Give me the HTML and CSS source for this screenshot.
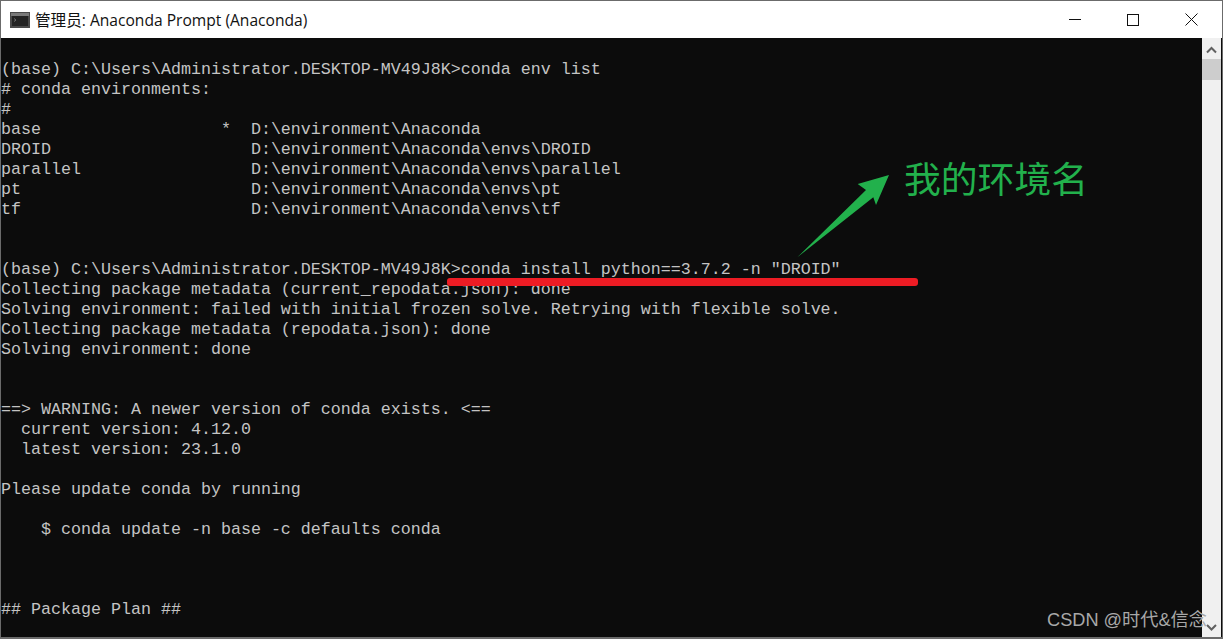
FILE: index.html
```html
<!DOCTYPE html>
<html lang="zh-CN">
<head>
<meta charset="utf-8">
<title>管理员: Anaconda Prompt (Anaconda)</title>
<link rel="stylesheet" href="styles.css">
</head>
<body>
<div class="window">
  <header class="titlebar">
    <svg class="app-icon" width="20" height="16" viewBox="0 0 20 16">
      <rect x="0" y="0" width="20" height="16" fill="#4a4a4a"/>
      <rect x="1" y="1" width="18" height="3" fill="#7a7a7a"/>
      <rect x="2" y="4" width="16" height="10" fill="#242424"/>
      <path d="M4 6.5l2 1.5-2 1.5" fill="none" stroke="#6f6f6f" stroke-width="1"/>
    </svg>
    <span class="title">管理员: Anaconda Prompt (Anaconda)</span>
    <div class="controls">
      <span class="control"><svg width="12" height="12" viewBox="0 0 12 12"><rect x="0" y="5" width="12" height="1" fill="#111"/></svg></span>
      <span class="control"><svg width="12" height="12" viewBox="0 0 12 12"><rect x="0.5" y="0.5" width="11" height="11" fill="none" stroke="#111"/></svg></span>
      <span class="control"><svg width="13" height="13" viewBox="0 0 13 13"><path d="M0.5 0.5l12 12M12.5 0.5l-12 12" fill="none" stroke="#111" stroke-width="1"/></svg></span>
    </div>
  </header>
  <div class="body">
    <pre class="console">

(base) C:\Users\Administrator.DESKTOP-MV49J8K&gt;conda env list
# conda environments:
#
base                  *  D:\environment\Anaconda
DROID                    D:\environment\Anaconda\envs\DROID
parallel                 D:\environment\Anaconda\envs\parallel
pt                       D:\environment\Anaconda\envs\pt
tf                       D:\environment\Anaconda\envs\tf


(base) C:\Users\Administrator.DESKTOP-MV49J8K&gt;conda install python==3.7.2 -n "DROID"
Collecting package metadata (current_repodata.json): done
Solving environment: failed with initial frozen solve. Retrying with flexible solve.
Collecting package metadata (repodata.json): done
Solving environment: done


==&gt; WARNING: A newer version of conda exists. &lt;==
  current version: 4.12.0
  latest version: 23.1.0

Please update conda by running

    $ conda update -n base -c defaults conda



## Package Plan ##</pre>
    <div class="scrollbar">
      <svg class="arrow-btn" width="19" height="21" viewBox="0 0 19 21"><path d="M5 14.5l4.5-4.5 4.5 4.5" fill="none" stroke="#606060" stroke-width="2"/></svg>
      <div class="thumb"></div>
      <div class="track"></div>
      <svg class="arrow-btn" width="19" height="21" viewBox="0 0 19 21"><path d="M5 9l4.5 4.5L14 9" fill="none" stroke="#606060" stroke-width="2"/></svg>
    </div>
  </div>
  <svg class="arrow" width="110" height="100" viewBox="0 0 110 100">
    <path d="M0.3 87.3L69 20L60.7 14L92 5L79 35L76.3 27.3Z" fill="#22b14c"/>
  </svg>
  <div class="underline"></div>
  <div class="note">我的环境名</div>
  <div class="watermark">CSDN @时代&amp;信念</div>
</div>
</body>
</html>
```
FILE: styles.css
```css
html, body {
  margin: 0;
  padding: 0;
  background: #0c0c0c;
  overflow: hidden;
}
.window {
  position: relative;
  width: 1223px;
  height: 639px;
  box-sizing: border-box;
  border: 1px solid #6b6b6b;
  border-bottom-width: 2px;
  display: flex;
  flex-direction: column;
  overflow: hidden;
}
.titlebar {
  flex: 0 0 37px;
  background: #fff;
  display: flex;
  align-items: center;
  padding-left: 9px;
}
.app-icon {
  flex: none;
  margin-right: 5px;
  filter: blur(0.6px);
}
.title {
  font: 15.6px "Open Sans", "Noto Sans CJK SC", sans-serif;
  color: #111;
  white-space: nowrap;
}
.controls {
  margin-left: auto;
  display: flex;
  height: 100%;
  padding-right: 1px;
}
.control {
  width: 58.5px;
  display: flex;
  align-items: center;
  justify-content: center;
}
.body {
  flex: 1;
  display: flex;
  min-height: 0;
}
.console {
  flex: 1;
  margin: 0;
  padding: 2px 0 0;
  background: #0c0c0c;
  color: #c4c4c4;
  font: 16.67px/20px "Liberation Mono", "Noto Sans CJK SC", monospace;
  overflow: hidden;
  white-space: pre;
}
.scrollbar {
  flex: 0 0 19px;
  background: #f0f0f0;
  display: flex;
  flex-direction: column;
  margin-right: 1px;
}
.arrow-btn {
  flex: none;
}
.thumb {
  height: 21px;
  background: #cdcdcd;
}
.track {
  flex: 1;
}
.arrow {
  position: absolute;
  left: 796px;
  top: 169px;
}
.underline {
  position: absolute;
  left: 446px;
  top: 277px;
  width: 471px;
  height: 8px;
  background: #ed1c24;
  border-radius: 3px;
}
.note {
  position: absolute;
  left: 903px;
  top: 150px;
  font: 36.8px/52px "Noto Sans CJK SC", sans-serif;
  color: #22b14c;
  white-space: nowrap;
}
.watermark {
  position: absolute;
  left: 1046px;
  top: 607px;
  font: 18.2px/24px "Liberation Sans", "Noto Sans CJK SC", sans-serif;
  color: #a8a8a8;
  white-space: nowrap;
}
```
